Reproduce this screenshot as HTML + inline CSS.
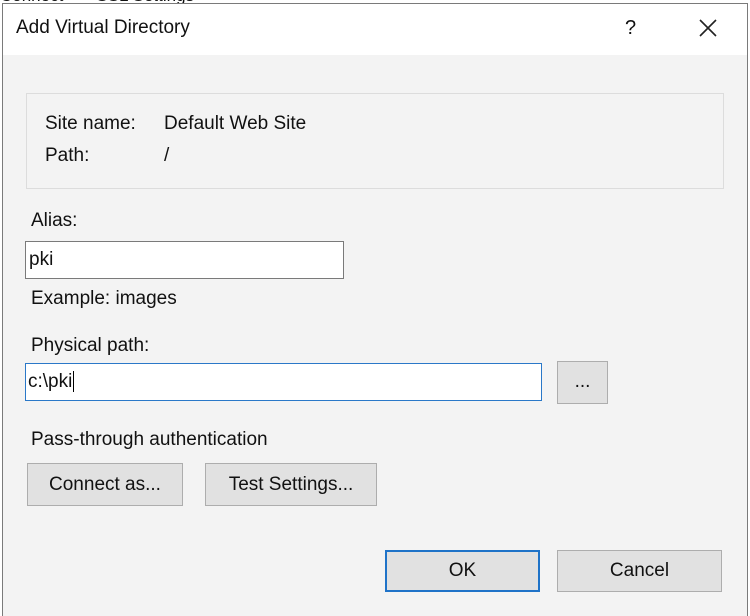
<!DOCTYPE html>
<html><head><style>
html,body{margin:0;width:750px;height:616px;overflow:hidden}
body{background:#fff;position:relative;font-family:"Liberation Sans",sans-serif;font-size:19px;color:#111}
.a{position:absolute;white-space:nowrap;line-height:20px}
.win{position:absolute;left:2px;top:3px;width:744px;height:613px;border:1px solid #7a7a7a;border-bottom:none;background:#f3f3f3}
.title{position:absolute;left:0;top:0;width:744px;height:51px;background:#fff}
.box{position:absolute;border:1px solid #dcdcdc;background:#f3f3f3}
.inp{position:absolute;background:#fff;border:1px solid #7a7a7a;box-sizing:border-box}
.btn{position:absolute;background:#e1e1e1;border:1px solid #adadad;box-sizing:border-box;text-align:center}
</style></head><body>
<div class="a" style="left:0;top:-14px;font-size:17px">Connect&nbsp;&nbsp;&nbsp;&nbsp;&nbsp;&nbsp;&nbsp;SSL Settings</div>
<div class="win">
<div class="title"></div>
</div>
<div class="a" style="left:16px;top:18px">Add Virtual Directory</div>
<div class="a" style="left:625px;top:18px;font-size:20px">?</div>
<svg style="position:absolute;left:699px;top:19px" width="18" height="18"><path d="M1 1L17 17M17 1L1 17" stroke="#222" stroke-width="1.6"/></svg>
<div class="box" style="left:26px;top:93px;width:696px;height:94px"></div>
<div class="a" style="left:45px;top:114px">Site name:</div>
<div class="a" style="left:164px;top:114px">Default Web Site</div>
<div class="a" style="left:45px;top:146px">Path:</div>
<div class="a" style="left:164px;top:146px">/</div>
<div class="a" style="left:31px;top:211px">Alias:</div>
<div class="inp" style="left:25px;top:241px;width:319px;height:38px"></div>
<div class="a" style="left:29px;top:250px">pki</div>
<div class="a" style="left:31px;top:289px">Example: images</div>
<div class="a" style="left:31px;top:336px">Physical path:</div>
<div class="inp" style="left:25px;top:363px;width:517px;height:38px;border-color:#2a78c8"></div>
<div class="a" style="left:28px;top:372px">c:\pki<span style="border-left:1px solid #000;margin-left:1px"></span></div>
<div class="btn" style="left:557px;top:361px;width:51px;height:43px;line-height:40px">...</div>
<div class="a" style="left:31px;top:430px">Pass-through authentication</div>
<div class="btn" style="left:27px;top:463px;width:156px;height:43px;line-height:41px">Connect as...</div>
<div class="btn" style="left:205px;top:463px;width:172px;height:43px;line-height:41px">Test Settings...</div>
<div class="btn" style="left:385px;top:550px;width:155px;height:42px;line-height:38px;border:2px solid #1f73c8">OK</div>
<div class="btn" style="left:557px;top:550px;width:165px;height:42px;line-height:40px">Cancel</div>
</body></html>
